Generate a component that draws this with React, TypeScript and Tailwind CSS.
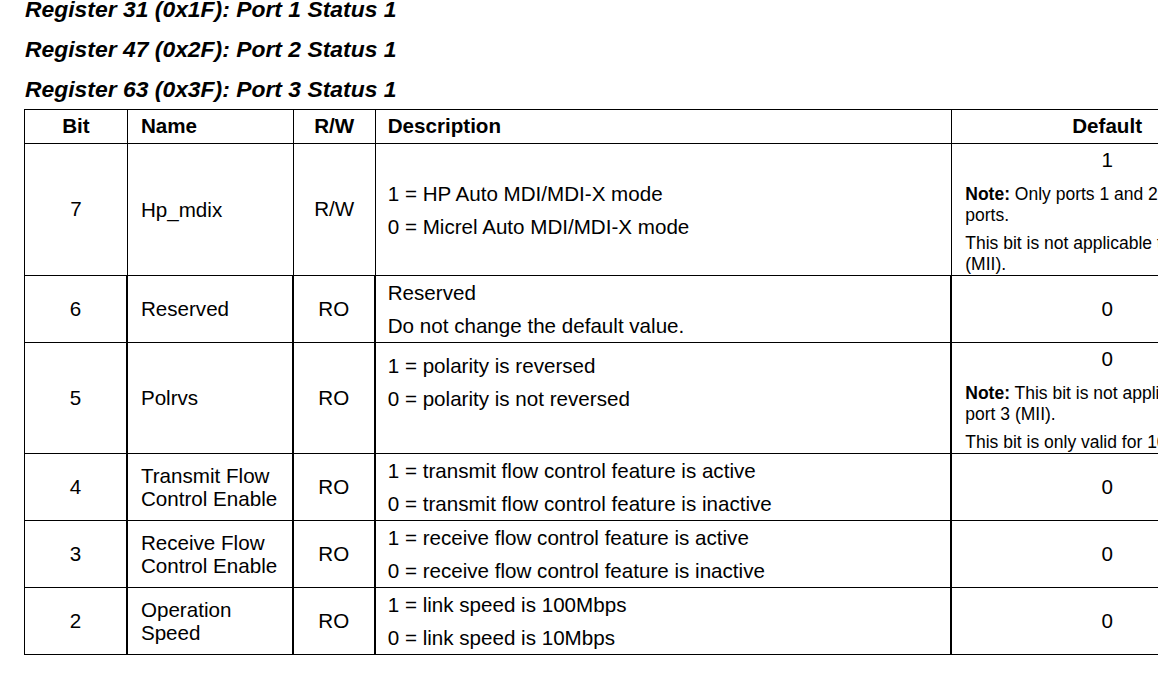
const rows = [
  {
    bit: "7",
    name: ["Hp_mdix"],
    rw: "R/W",
    desc: ["1 = HP Auto MDI/MDI-X mode", "0 = Micrel Auto MDI/MDI-X mode"],
    descAlign: "center",
    def: "1",
    notes: [
      { bold: "Note:", text: " Only ports 1 and 2 are copper ports." },
      { text: "This bit is not applicable to port 3 (MII)." },
    ],
    h: "h-[132px]",
    thick: false,
  },
  {
    bit: "6",
    name: ["Reserved"],
    rw: "RO",
    desc: ["Reserved", "Do not change the default value."],
    descAlign: "top",
    def: "0",
    h: "h-[67px]",
    thick: true,
  },
  {
    bit: "5",
    name: ["Polrvs"],
    rw: "RO",
    desc: ["1 = polarity is reversed", "0 = polarity is not reversed"],
    descAlign: "top5",
    def: "0",
    notes: [
      { bold: "Note:", text: " This bit is not applicable to port 3 (MII)." },
      { text: "This bit is only valid for 10BT." },
    ],
    h: "h-[111px]",
    thick: true,
  },
  {
    bit: "4",
    name: ["Transmit Flow", "Control Enable"],
    rw: "RO",
    desc: ["1 = transmit flow control feature is active", "0 = transmit flow control feature is inactive"],
    descAlign: "top",
    def: "0",
    h: "h-[67px]",
    thick: true,
  },
  {
    bit: "3",
    name: ["Receive Flow", "Control Enable"],
    rw: "RO",
    desc: ["1 = receive flow control feature is active", "0 = receive flow control feature is inactive"],
    descAlign: "top",
    def: "0",
    h: "h-[67px]",
    thick: true,
  },
  {
    bit: "2",
    name: ["Operation", "Speed"],
    rw: "RO",
    desc: ["1 = link speed is 100Mbps", "0 = link speed is 10Mbps"],
    descAlign: "top",
    def: "0",
    h: "h-[67px]",
    thick: true,
  },
];

const headings = [
  "Register 31 (0x1F): Port 1 Status 1",
  "Register 47 (0x2F): Port 2 Status 1",
  "Register 63 (0x3F): Port 3 Status 1",
];

export default function App() {
  return (
    <div
      className="w-[1158px] h-[674px] overflow-hidden bg-white text-black"
      style={{ fontFamily: '"Liberation Sans", Arial, sans-serif' }}
    >
      <div className="-mt-[11px] pl-[25px]">
        {headings.map((h) => (
          <div key={h} className="text-[22.9px] leading-[40px] font-bold italic whitespace-nowrap">
            {h}
          </div>
        ))}
      </div>

      <div className="ml-[24px] w-[1238px] border-l border-t border-black text-[20.6px]">
        {/* header */}
        <div className="flex h-[34px] border-b border-black font-bold">
          <div className="w-[103px] border-r border-black flex items-center justify-center">Bit</div>
          <div className="w-[166px] border-r border-black flex items-center pl-[13px]">Name</div>
          <div className="w-[82px] border-r border-black flex items-center justify-center">R/W</div>
          <div className="w-[577px] border-r border-black flex items-center pl-[12px]">Description</div>
          <div className="w-[310px] flex items-center justify-center">Default</div>
        </div>

        {rows.map((r) => {
          const br = r.thick ? "border-r-2" : "border-r";
          return (
            <div key={r.bit} className={`flex ${r.h} border-b border-black`}>
              <div className={`w-[103px] ${br} border-black flex items-center justify-center`}>{r.bit}</div>
              <div className={`w-[166px] ${br} border-black flex flex-col justify-center pl-[13px] leading-[23.5px]`}>
                {r.name.map((n) => (
                  <div key={n} className="whitespace-nowrap">{n}</div>
                ))}
              </div>
              <div className={`w-[82px] ${br} border-black flex items-center justify-center`}>{r.rw}</div>
              <div
                className={`w-[577px] ${br} border-black flex flex-col pl-[12px] leading-[33px] ${
                  r.descAlign === "center" ? "justify-center" : r.descAlign === "top5" ? "pt-[6px]" : "pt-0"
                }`}
              >
                {r.desc.map((d) => (
                  <div key={d} className="whitespace-nowrap">{d}</div>
                ))}
              </div>
              {r.notes ? (
                <div className="w-[310px] flex flex-col">
                  <div className="text-center leading-[31px]">{r.def}</div>
                  <div className="mt-[9px] pl-[13px] pr-[8px] text-[17.5px] leading-[20.5px] flex flex-col gap-[8px]">
                    {r.notes.map((n, i) => (
                      <p key={i}>
                        {n.bold && <span className="font-bold">{n.bold}</span>}
                        {n.text}
                      </p>
                    ))}
                  </div>
                </div>
              ) : (
                <div className="w-[310px] flex items-center justify-center">{r.def}</div>
              )}
            </div>
          );
        })}
      </div>
    </div>
  );
}
